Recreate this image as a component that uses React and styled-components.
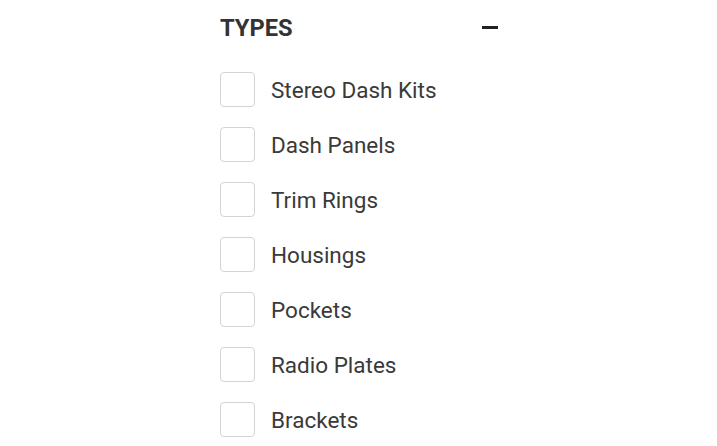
import React from "react";
import styled, { createGlobalStyle } from "styled-components";

const Global = createGlobalStyle`
  html, body { margin: 0; padding: 0; background: #fff; }
  body { font-family: Roboto, "Noto Sans", sans-serif; }
`;

const Panel = styled.section`
  width: 278px;
  margin-left: 220px;
  padding-top: 14px;
`;

const Header = styled.div`
  display: flex;
  align-items: center;
  justify-content: space-between;
  height: 28px;
`;

const Title = styled.h3`
  margin: 0;
  font-size: 23.7px;
  line-height: 28px;
  font-weight: 700;
  color: #333;
`;

const Toggle = styled.button`
  width: 16px;
  height: 16px;
  padding: 0;
  border: 0;
  background: transparent;
  position: relative;
  cursor: pointer;
  &::before {
    content: "";
    position: absolute;
    left: 0;
    right: 0;
    top: 6px;
    height: 3px;
    background: #222;
  }
`;

const List = styled.ul`
  list-style: none;
  margin: 30px 0 0;
  padding: 0;
  display: flex;
  flex-direction: column;
  gap: 20px;
`;

const Item = styled.li`
  display: flex;
  align-items: center;
  gap: 16px;
  height: 35px;
`;

const Box = styled.span`
  width: 33px;
  height: 33px;
  border: 1px solid #d4d4d4;
  border-radius: 4px;
  flex: none;
`;

const Label = styled.span`
  font-size: 22.5px;
  padding-top: 1px;
  color: #3a3a3a;
`;

const types = [
  "Stereo Dash Kits",
  "Dash Panels",
  "Trim Rings",
  "Housings",
  "Pockets",
  "Radio Plates",
  "Brackets",
];

export default function App() {
  return (
    <>
      <Global />
      <Panel>
        <Header>
          <Title>TYPES</Title>
          <Toggle aria-label="Collapse" />
        </Header>
        <List>
          {types.map((t) => (
            <Item key={t}>
              <Box />
              <Label>{t}</Label>
            </Item>
          ))}
        </List>
      </Panel>
    </>
  );
}
